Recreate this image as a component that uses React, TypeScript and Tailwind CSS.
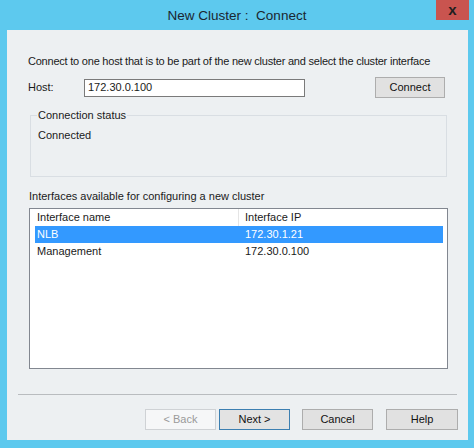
import React from "react";

const rows = [
  { name: "NLB", ip: "172.30.1.21", selected: true },
  { name: "Management", ip: "172.30.0.100", selected: false },
];

function WinButton({
  label,
  disabled,
  isDefault,
  className = "",
}: {
  label: string;
  disabled?: boolean;
  isDefault?: boolean;
  className?: string;
}) {
  const tone = disabled
    ? "bg-[#f6f7f8] border-[#cfd2d5] text-[#9a9a9a]"
    : isDefault
      ? "bg-[#e3e3e3] border-[#3c7fb1] text-[#111]"
      : "bg-[#e1e1e1] border-[#adadad] text-[#111]";
  return (
    <button
      className={`h-[21px] border flex items-center justify-center text-[11px] ${tone} ${className}`}
    >
      {label}
    </button>
  );
}

export default function App() {
  return (
    <div className="w-[474px] h-[448px] bg-[#5dc9ee] flex flex-col font-['Liberation_Sans',Arial,sans-serif] text-[11px] text-[#1a1a1a]">
      {/* title bar */}
      <div className="h-[30px] relative flex items-center justify-center">
        <span className="text-[13.5px] text-[#1b2630] mt-[2px]">
          New Cluster :&nbsp; Connect
        </span>
        <span className="absolute top-0 right-[5px] w-[33px] h-[20px] bg-[#c9544f] flex items-center justify-center text-[15px] font-bold text-[#1f1f1f] leading-none pb-[2px]">
          x
        </span>
      </div>

      {/* client area */}
      <div className="ml-[7px] mr-[6px] mb-[8px] flex-1 bg-[#edf0f2] flex flex-col">
        <p className="mt-[23px] ml-[21px] leading-[16px] whitespace-nowrap tracking-[-0.22px]">
          Connect to one host that is to be part of the new cluster and select the cluster interface
        </p>

        <div className="mt-[8px] ml-[21px] h-[21px] flex items-center">
          <span className="w-[56px]">Host:</span>
          <div className="w-[221px] h-[18px] bg-white border border-[#7a7a7a] flex items-center pl-[3px]">
            172.30.0.100
          </div>
          <WinButton label="Connect" className="ml-[70px] w-[70px]" />
        </div>

        <div className="mt-[17px] ml-[23px] w-[417px] h-[62px] border border-[#d9dee3] relative">
          <span className="absolute -top-[9px] left-[6px] px-[1px] bg-[#edf0f2] leading-[16px]">
            Connection status
          </span>
          <div className="mt-[11px] ml-[7px] leading-[16px]">Connected</div>
        </div>

        <p className="mt-[11px] ml-[22px] leading-[16px] whitespace-nowrap">
          Interfaces available for configuring a new cluster
        </p>

        <div className="mt-[4px] ml-[22px] w-[419px] h-[161px] bg-white border border-[#828790] flex flex-col">
          <div className="h-[17px] flex items-center">
            <span className="w-[209px] h-full pl-[7px] flex items-center border-r border-[#e5e5e5]">
              Interface name
            </span>
            <span className="pl-[6px]">Interface IP</span>
          </div>
          {rows.map((r) => (
            <div
              key={r.name}
              className={`h-[17px] ml-[5px] mr-[4px] flex items-center ${
                r.selected ? "bg-[#3399ff] text-white" : ""
              }`}
            >
              <span className="w-[204px] pl-[2px]">{r.name}</span>
              <span className="pl-[6px]">{r.ip}</span>
            </div>
          ))}
        </div>

        <div className="mt-[25px] ml-[11px] w-[439px] h-px bg-[#b9bcbf]" />

        <div className="mt-[14px] ml-[138px] flex">
          <WinButton label="< Back" disabled className="w-[71px]" />
          <WinButton label="Next >" isDefault className="ml-[3px] w-[71px]" />
          <WinButton label="Cancel" className="ml-[12px] w-[71px]" />
          <WinButton label="Help" className="ml-[13px] w-[72px]" />
        </div>
      </div>
    </div>
  );
}
